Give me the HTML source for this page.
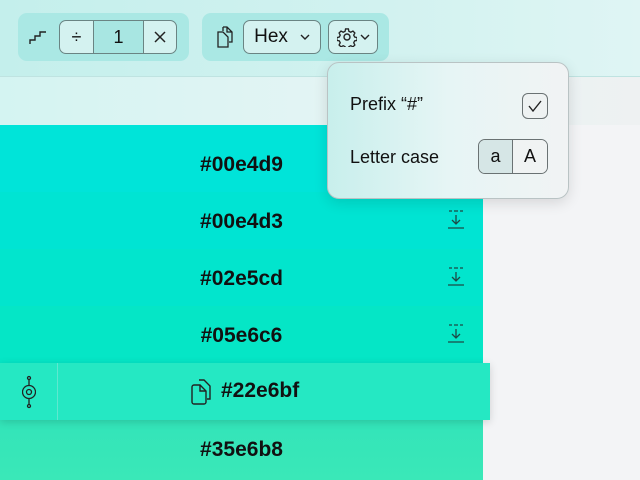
<!DOCTYPE html>
<html><head><meta charset="utf-8"><style>
*{box-sizing:border-box;margin:0;padding:0}
body{width:640px;height:480px;overflow:hidden;position:relative;font-family:"Liberation Sans",sans-serif;background:#f3f4f6}
.top{position:absolute;left:0;top:0;width:640px;height:76px;background:linear-gradient(90deg,#c4efec,#d2f2f0 60%,#dff5f4)}
.band{position:absolute;left:0;top:76px;width:640px;height:49px;background:linear-gradient(90deg,#d4f4f2,#e6f4f4 60%,#eef1f2);border-top:1px solid #bfe3e1}
.grp{position:absolute;top:13px;height:48px;background:#aae8e4;border-radius:9px}
.btn{position:absolute;top:20px;height:34px;border:1.5px solid #6a8483;border-radius:7px;background:#d4f2f0;font-size:18px;color:#111;display:flex;align-items:center;justify-content:center}
.row{position:absolute;left:0;width:483px;font-weight:bold;font-size:21px;color:#111;display:flex;align-items:center;justify-content:center}
.dl{position:absolute;left:447px}
.pop{position:absolute;left:327px;top:62px;width:242px;height:137px;border:1.5px solid #b9c3c4;border-radius:12px;background:linear-gradient(90deg,#c8efec,#e6f5f5 50%,#f1f3f4);box-shadow:0 4px 14px rgba(0,0,0,.12);font-size:18px;color:#111}
</style></head><body>
<div class="top"></div><div class="band"></div>
<div class="grp" style="left:18px;width:171px"></div>
<div class="grp" style="left:202px;width:187px"></div>
<svg style="position:absolute;left:29px;top:29px" width="20" height="16" viewBox="0 0 20 16" fill="none" stroke="#222" stroke-width="1.4"><path d="M1 15V11H6V7H11V3H17"/></svg>
<div class="btn" style="left:59px;width:118px;padding:0;overflow:hidden;justify-content:flex-start">
<div style="width:34px;height:100%;display:flex;align-items:center;justify-content:center;border-right:1.5px solid #6a8483">÷</div>
<div style="width:50px;height:100%;display:flex;align-items:center;justify-content:center;background:#a8e6e2;border-right:1.5px solid #6a8483">1</div>
<div style="flex:1;display:flex;align-items:center;justify-content:center"><svg width="12" height="12" viewBox="0 0 12 12" stroke="#222" stroke-width="1.5"><path d="M1 1l10 10M11 1L1 11"/></svg></div></div>
<svg style="position:absolute;left:215px;top:26px" width="20" height="22" viewBox="0 0 20 22" fill="none" stroke="#222" stroke-width="1.3"><path d="M8 1h4l5 5v10h-3M8 1v4M12 1v5h5"/><path d="M3 6h5l5 5v10H3z"/></svg>
<div class="btn" style="left:243px;width:78px;font-size:19px">Hex<svg style="margin-left:12px" width="10" height="6" viewBox="0 0 10 6" fill="none" stroke="#222" stroke-width="1.4"><path d="M1 1l4 4 4-4"/></svg></div>
<div class="btn" style="left:328px;width:50px"><svg width="20" height="20" viewBox="0 0 20 20" fill="none" stroke="#222" stroke-width="1.4"><circle cx="10" cy="10" r="3"/><path d="M8.5 1.5h3l.5 2.5 2 1 2.3-1.2 2 2-1.2 2.3 1 2 2.5.5v0 3l-2.5.5-1 2 1.2 2.3-2 2-2.3-1.2-2 1-.5 2.5h-3l-.5-2.5-2-1-2.3 1.2-2-2 1.2-2.3-1-2-2.5-.5v-3l2.5-.5 1-2-1.2-2.3 2-2 2.3 1.2 2-1z" transform="scale(.95) translate(.5 .5)"/></svg><svg style="margin-left:3px" width="10" height="6" viewBox="0 0 10 6" fill="none" stroke="#222" stroke-width="1.4"><path d="M1 1l4 4 4-4"/></svg></div>

<div class="row" style="top:125px;height:67px;padding-top:12px;background:#00e4d9">#00e4d9</div>
<div class="row" style="top:192px;height:57px;padding-top:2px;background:#00e4d3">#00e4d3</div>
<div class="row" style="top:249px;height:57px;padding-top:2px;background:#02e5cd">#02e5cd</div>
<div class="row" style="top:306px;height:57px;padding-top:2px;background:#05e6c6">#05e6c6</div>
<div class="row" style="top:420px;height:60px;background:linear-gradient(#33e4b9,#3ae8b8)">#35e6b8</div>
<div style="position:absolute;left:0;top:363px;width:490px;height:57px;background:#25e8c3;box-shadow:0 2px 8px rgba(0,0,0,.15);display:flex;align-items:center;font-weight:bold;font-size:21px;color:#111">
<div style="width:58px;height:100%;border-right:1.5px solid #5fe8cf;display:flex;align-items:center;justify-content:center"><svg width="14" height="36" viewBox="0 0 14 36" fill="none" stroke="#222" stroke-width="1.3"><circle cx="7" cy="4" r="1.5"/><path d="M7 5.5v6M7 24.5v6"/><circle cx="7" cy="18" r="6.5"/><circle cx="7" cy="18" r="2.5"/><circle cx="7" cy="32" r="1.5"/></svg></div>
<div style="position:absolute;left:190px;top:16px"><svg width="22" height="26" viewBox="0 0 22 26" fill="none" stroke="#222" stroke-width="1.4"><path d="M9 1h5l6 6v13h-3"/><path d="M2 8a2 2 0 0 1 2-2h6l6 6v11a2 2 0 0 1-2 2H4a2 2 0 0 1-2-2z"/><path d="M10 6v6h6"/></svg></div>
<div style="position:absolute;left:221px;top:16px">#22e6bf</div></div>
<svg class="dl" style="top:210px" width="18" height="20" viewBox="0 0 18 20" fill="none" stroke="#1d4a46" stroke-width="1.3"><path d="M2 1h3M7 1h4M13 1h3M9 5v9M5 10l4 4 4-4M1 18h16"/></svg>
<svg class="dl" style="top:267px" width="18" height="20" viewBox="0 0 18 20" fill="none" stroke="#1d4a46" stroke-width="1.3"><path d="M2 1h3M7 1h4M13 1h3M9 5v9M5 10l4 4 4-4M1 18h16"/></svg>
<svg class="dl" style="top:324px" width="18" height="20" viewBox="0 0 18 20" fill="none" stroke="#1d4a46" stroke-width="1.3"><path d="M2 1h3M7 1h4M13 1h3M9 5v9M5 10l4 4 4-4M1 18h16"/></svg>

<div class="pop">
<div style="position:absolute;left:22px;top:31px">Prefix “#”</div>
<div style="position:absolute;left:194px;top:30px;width:26px;height:26px;border:1.5px solid #6a7273;border-radius:6px;background:#eef2f2;display:flex;align-items:center;justify-content:center"><svg width="14" height="12" viewBox="0 0 14 12" fill="none" stroke="#222" stroke-width="1.4"><path d="M1 6l4 5 8-10"/></svg></div>
<div style="position:absolute;left:22px;top:84px">Letter case</div>
<div style="position:absolute;left:150px;top:76px;width:70px;height:35px;border:1.5px solid #6a7273;border-radius:7px;display:flex;overflow:hidden">
<div style="width:34px;background:#d6e6e6;border-right:1.5px solid #6a7273;display:flex;align-items:center;justify-content:center">a</div>
<div style="flex:1;background:#f0f3f3;display:flex;align-items:center;justify-content:center">A</div></div>
</div>
</body></html>
